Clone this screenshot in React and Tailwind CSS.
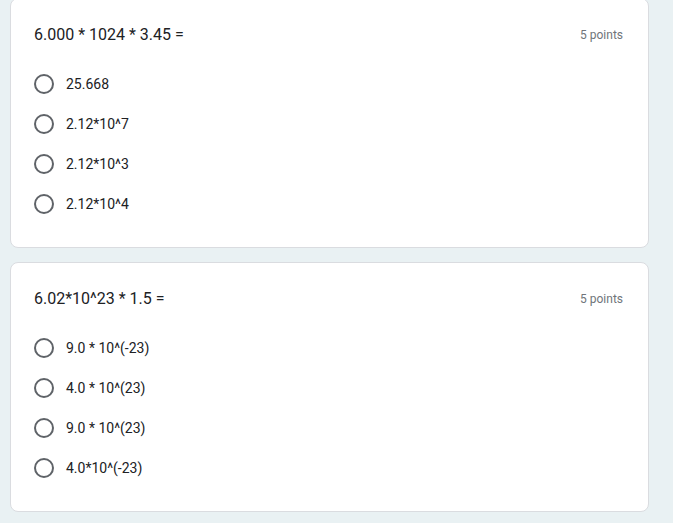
import React from "react";

const questions = [
  { q: "6.000 * 1024 * 3.45 =", opts: ["25.668", "2.12*10^7", "2.12*10^3", "2.12*10^4"] },
  { q: "6.02*10^23 * 1.5 =", opts: ["9.0 * 10^(-23)", "4.0 * 10^(23)", "9.0 * 10^(23)", "4.0*10^(-23)"] },
];

export default function App() {
  return (
    <div className="w-[673px] h-[523px] overflow-hidden bg-[#e9f1f3]" style={{ fontFamily: "Roboto, Arial, sans-serif" }}>
      <div className="-mt-[2px] ml-[10px] w-[639px] flex flex-col gap-[14px]">
        {questions.map((item, i) => (
          <div key={i} className="bg-white border border-[#dadce0] rounded-[8px] pl-[23px] pr-[25px] pt-[24px] pb-[23px]">
            <div className="flex justify-between items-center h-[24px]">
              <div className="text-[16px] text-[#202124] leading-[24px]">{item.q}</div>
              <div className="text-[12px] text-[#70757a] leading-[16px]">5 points</div>
            </div>
            <div className="mt-[17px] flex flex-col">
              {item.opts.map((o, j) => (
                <div key={j} className="h-[40px] flex items-center gap-[12px]">
                  <div className="w-[20px] h-[20px] rounded-full border-2 border-[#5f6368] shrink-0"></div>
                  <div className="text-[14px] text-[#202124] leading-[20px]">{o}</div>
                </div>
              ))}
            </div>
          </div>
        ))}
      </div>
    </div>
  );
}
